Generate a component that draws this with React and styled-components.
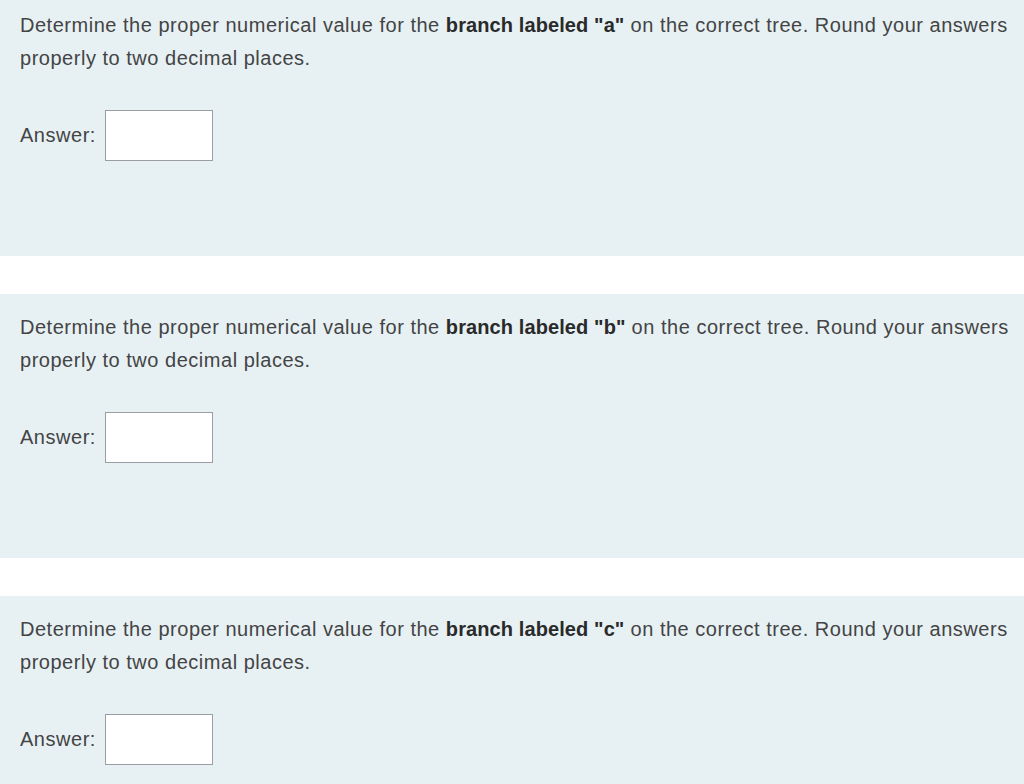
import React from 'react'
import styled, { createGlobalStyle } from 'styled-components'

const GlobalStyle = createGlobalStyle`
  html, body {
    margin: 0;
    padding: 0;
    background: #ffffff;
  }
  body {
    font-family: "Liberation Sans", Arial, Helvetica, sans-serif;
    color: #444444;
  }
`

export const Page = styled.div`
  display: flex;
  flex-direction: column;
  gap: 38px;
`

export const Card = styled.section`
  background: #e7f1f4;
  padding: ${(p) => (p.$clipped ? '9px' : '17px')} 10px 95px 20px;
`

export const Question = styled.p`
  margin: 0;
  font-size: 20px;
  line-height: 33px;
  letter-spacing: 0.52px;
  color: #444;

  strong {
    font-weight: bold;
    color: #2a2a2a;
    letter-spacing: 0.1px;
  }
`

export const AnswerRow = styled.div`
  display: flex;
  align-items: center;
  gap: 9px;
  margin-top: 35px;
`

export const Label = styled.label`
  font-size: 20px;
  letter-spacing: 0.52px;
  color: #444;
`

export const Input = styled.input`
  box-sizing: border-box;
  width: 108px;
  height: 51px;
  border: 1px solid #9a9ea3;
  background: #fff;
  font-size: 18px;
  padding: 0 8px;
  outline: none;
`

const items = ['a', 'b', 'c']

export default function App() {
  return (
    <>
      <GlobalStyle />
      <Page>
        {items.map((l, i) => (
          <Card key={l} $clipped={i === 0}>
            <Question>
              Determine the proper numerical value for the <strong>branch labeled "{l}"</strong> on the correct tree. Round your answers properly to two decimal places.
            </Question>
            <AnswerRow>
              <Label>Answer:</Label>
              <Input type="text" />
            </AnswerRow>
          </Card>
        ))}
      </Page>
    </>
  )
}
